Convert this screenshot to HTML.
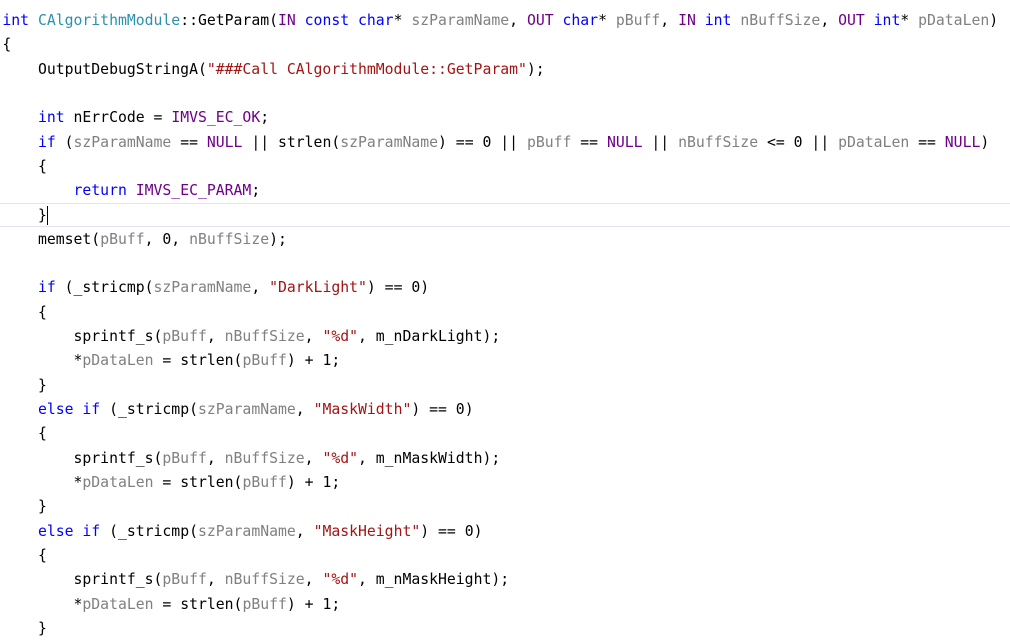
<!DOCTYPE html>
<html><head><meta charset="utf-8"><style>
html,body{margin:0;padding:0;background:#fff;width:1010px;height:643px;overflow:hidden}
pre{margin:0;position:absolute;left:2.4px;top:9px;font-family:"DejaVu Sans Mono","Liberation Mono",monospace;font-size:14.78px;line-height:24.32px;color:#000}
.k{color:#0000ff}.t{color:#2b91af}.m{color:#6f008a}.p{color:#808080}.s{color:#a31515}
.hl{position:absolute;left:0;top:203px;width:1010px;height:24px;border-top:1px solid #e4e4ec;border-bottom:1px solid #e4e4ec;box-sizing:border-box}
.cur{position:absolute;left:47px;top:206px;width:1px;height:19px;background:#000}
</style></head><body>
<div class="hl"></div><div class="cur"></div>
<pre><span class="k">int</span> <span class="t">CAlgorithmModule</span>::GetParam(<span class="m">IN</span> <span class="k">const</span> <span class="k">char</span>* <span class="p">szParamName</span>, <span class="m">OUT</span> <span class="k">char</span>* <span class="p">pBuff</span>, <span class="m">IN</span> <span class="k">int</span> <span class="p">nBuffSize</span>, <span class="m">OUT</span> <span class="k">int</span>* <span class="p">pDataLen</span>)
{
    OutputDebugStringA(<span class="s">"###Call CAlgorithmModule::GetParam"</span>);

    <span class="k">int</span> nErrCode = <span class="m">IMVS_EC_OK</span>;
    <span class="k">if</span> (<span class="p">szParamName</span> == <span class="m">NULL</span> || strlen(<span class="p">szParamName</span>) == 0 || <span class="p">pBuff</span> == <span class="m">NULL</span> || <span class="p">nBuffSize</span> &lt;= 0 || <span class="p">pDataLen</span> == <span class="m">NULL</span>)
    {
        <span class="k">return</span> <span class="m">IMVS_EC_PARAM</span>;
    }
    memset(<span class="p">pBuff</span>, 0, <span class="p">nBuffSize</span>);

    <span class="k">if</span> (_stricmp(<span class="p">szParamName</span>, <span class="s">"DarkLight"</span>) == 0)
    {
        sprintf_s(<span class="p">pBuff</span>, <span class="p">nBuffSize</span>, <span class="s">"%d"</span>, m_nDarkLight);
        *<span class="p">pDataLen</span> = strlen(<span class="p">pBuff</span>) + 1;
    }
    <span class="k">else</span> <span class="k">if</span> (_stricmp(<span class="p">szParamName</span>, <span class="s">"MaskWidth"</span>) == 0)
    {
        sprintf_s(<span class="p">pBuff</span>, <span class="p">nBuffSize</span>, <span class="s">"%d"</span>, m_nMaskWidth);
        *<span class="p">pDataLen</span> = strlen(<span class="p">pBuff</span>) + 1;
    }
    <span class="k">else</span> <span class="k">if</span> (_stricmp(<span class="p">szParamName</span>, <span class="s">"MaskHeight"</span>) == 0)
    {
        sprintf_s(<span class="p">pBuff</span>, <span class="p">nBuffSize</span>, <span class="s">"%d"</span>, m_nMaskHeight);
        *<span class="p">pDataLen</span> = strlen(<span class="p">pBuff</span>) + 1;
    }
</pre>
</body></html>
